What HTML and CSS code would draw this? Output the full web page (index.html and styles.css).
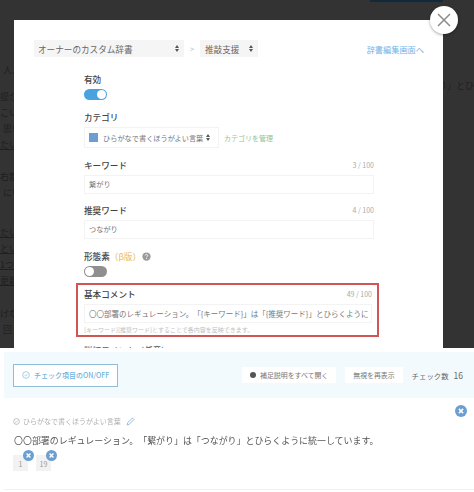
FILE: index.html
```html
<!DOCTYPE html>
<html lang="ja">
<head>
<meta charset="utf-8">
<title>カスタム辞書</title>
<link rel="stylesheet" href="styles.css">
</head>
<body>
<div class="page">
  <section class="backdrop">
    <div class="backpage">
      <div class="topbar"></div>
      <p class="bl l1">人人</p>
      <p class="bl l2 right">り」とひ</p>
      <p class="bl l3">提が</p>
      <p class="bl l4">こい</p>
      <p class="bl l4 ind">思い</p>
      <p class="bl l4 ul">たい</p>
      <p class="bl l5">右割</p>
      <p class="bl l4 ind">にい</p>
      <p class="bl l6 ul">たい</p>
      <p class="bl l4 ul">とい</p>
      <p class="bl l4 ul">1つ</p>
      <p class="bl l4 ul">更新</p>
      <p class="bl l7">けな</p>
      <p class="bl l4 ind">回</p>
    </div>
    <div class="modal">
      <div class="modal-head">
        <div class="dict-path">
          <div class="select sel-owner"><span>オーナーのカスタム辞書</span><i class="updown"></i></div>
          <span class="gt">&gt;</span>
          <div class="select sel-sub"><span>推敲支援</span><i class="updown"></i></div>
        </div>
        <a class="edit-link">辞書編集画面へ</a>
      </div>
      <div class="form">
        <div class="label lab-on">有効</div>
        <div class="toggle on"><i></i></div>
        <div class="label lab-cat">カテゴリ</div>
        <div class="cat-row">
          <div class="cat-select"><b class="swatch"></b><span>ひらがなで書くほうがよい言葉</span><i class="updown"></i></div>
          <a class="cat-link">カテゴリを管理</a>
        </div>
        <div class="field-head fh-key"><span class="label">キーワード</span><span class="count">3 / 100</span></div>
        <div class="input">繋がり</div>
        <div class="field-head fh-rec"><span class="label">推奨ワード</span><span class="count">4 / 100</span></div>
        <div class="input">つながり</div>
        <div class="label lab-morph">形態素<span class="beta">（β版）</span>
          <svg class="help" viewBox="0 0 12 12"><circle cx="6" cy="6" r="5.5" fill="#9a9a9a"/><path d="M4.3 4.8c0-1 .8-1.6 1.7-1.6s1.7.6 1.7 1.5c0 1.2-1.6 1.2-1.6 2.5" fill="none" stroke="#fff" stroke-width="1.1"/><circle cx="6.1" cy="8.8" r=".7" fill="#fff"/></svg>
        </div>
        <div class="toggle off"><i></i></div>
        <div class="highlight">
          <div class="field-head fh-base"><span class="label">基本コメント</span><span class="count">49 / 100</span></div>
          <div class="input input-long"><span>〇〇部署のレギュレーション。「{キーワード}」は「{推奨ワード}」とひらくように</span></div>
          <div class="hint">{キーワード}{推奨ワード}とすることで各内容を反映できます。</div>
        </div>
        <div class="label lab-next">詳細コメント（任意）</div>
      </div>
    </div>
    <button class="close" aria-label="閉じる"><svg viewBox="0 0 16 16"><path d="M2 2 14 14M14 2 2 14" stroke="#8b8b8b" stroke-width="1.5" fill="none"/></svg></button>
  </section>
  <section class="panel">
    <div class="toolbar">
      <button class="check-btn"><svg viewBox="0 0 12 12"><circle cx="6" cy="6" r="5" fill="none" stroke="#7db6d8"/><path d="M3.8 6.1 5.4 7.6 8.2 4.6" fill="none" stroke="#7db6d8"/></svg>チェック項目のON/OFF</button>
      <div class="tools">
        <button class="tool"><i class="dot"></i>補足説明をすべて開く</button>
        <button class="tool tool-re">無視を再表示</button>
        <span class="check-count">チェック数<b>16</b></span>
      </div>
    </div>
    <div class="card">
      <svg class="x-badge big" viewBox="0 0 12 12"><circle cx="6" cy="6" r="6" fill="#6b9fd1"/><path d="M3.9 3.9 8.1 8.1M8.1 3.9 3.9 8.1" stroke="#fff" stroke-width="1.5"/></svg>
      <div class="cat-tag">
        <svg class="tick" viewBox="0 0 12 12"><circle cx="6" cy="6" r="5" fill="none" stroke="#9a9a9a"/><path d="M3.8 6.1 5.4 7.6 8.2 4.6" fill="none" stroke="#9a9a9a"/></svg>
        <span>ひらがなで書くほうがよい言葉</span>
        <svg class="pencil" viewBox="0 0 12 12"><path d="M1.5 10.5 2.3 7.6 8.6 1.4 10.6 3.4 4.4 9.7Z" fill="none" stroke="#7aa7d6"/></svg>
      </div>
      <p class="comment">〇〇部署のレギュレーション。「繋がり」は「つながり」とひらくように統一しています。</p>
      <div class="pages">
        <span class="pg">1<svg class="x-badge" viewBox="0 0 12 12"><circle cx="6" cy="6" r="6" fill="#6b9fd1"/><path d="M3.9 3.9 8.1 8.1M8.1 3.9 3.9 8.1" stroke="#fff" stroke-width="1.5"/></svg></span>
        <span class="pg">19<svg class="x-badge" viewBox="0 0 12 12"><circle cx="6" cy="6" r="6" fill="#6b9fd1"/><path d="M3.9 3.9 8.1 8.1M8.1 3.9 3.9 8.1" stroke="#fff" stroke-width="1.5"/></svg></span>
      </div>
    </div>
  </section>
</div>
</body>
</html>
```

FILE: styles.css
```css
* { box-sizing: border-box; }
html, body { margin: 0; padding: 0; background: #fff; }
body { font-family: "Noto Sans CJK JP", "Noto Sans", sans-serif; color: #444; text-spacing-trim: space-all; }
.page { width: 474px; height: 492px; overflow: hidden; filter: blur(.5px); }
button { font-family: inherit; margin: 0; cursor: pointer; }

.backdrop { position: relative; height: 348px; background: #333; }
.backpage { height: 348px; overflow: hidden; color: #1f1f1f; font-size: 9px; line-height: 13px; }
.topbar { width: 73px; height: 2px; margin-left: 370px; background: #10293d; }
.bl { margin: 3px 0 0; height: 13px; white-space: nowrap; }
.bl.l1 { margin-top: 61px; padding-left: 3px; }
.bl.l2 { margin-top: 3px; text-align: right; }
.bl.l3 { margin-top: -2px; }
.bl.ind { padding-left: 3px; }
.bl.ul { text-decoration: underline; }
.bl.l5 { margin-top: 19px; }
.bl.l6 { margin-top: 27px; }
.bl.l7 { margin-top: 20px; }

.modal { position: absolute; left: 14px; top: 20px; width: 429px; height: 328px; overflow: hidden; background: #fff; }
.modal-head { display: flex; justify-content: space-between; align-items: center; height: 17px; margin: 20px 19px 0 20px; }
.dict-path { display: flex; align-items: center; }
.select { display: flex; align-items: center; justify-content: space-between; height: 17px; padding: 0 3px 0 4px; background: #f5f5f5; font-size: 8.6px; color: #666; }
.sel-owner { width: 150px; }
.sel-sub { width: 58px; padding-left: 5px; }
.gt { width: 16px; text-align: center; font-size: 8px; color: #bbb; }
.updown { display: inline-block; flex: none; width: 6px; height: 7px; position: relative; margin-right: 1px; }
.updown::before, .updown::after { content: ""; position: absolute; left: 1px; border-left: 2px solid transparent; border-right: 2px solid transparent; }
.updown::before { top: 0; border-bottom: 3px solid #555; }
.updown::after { bottom: 0; border-top: 3px solid #555; }
.edit-link { font-size: 8.2px; color: #6cb5e8; }

.form { width: 290px; margin-left: 70px; }
.label { font-size: 8.6px; font-weight: 500; line-height: 12px; color: #444; }
.lab-on { margin-top: 16px; }
.toggle { display: flex; align-items: center; width: 23px; height: 11px; border-radius: 6px; padding: 1px; margin-top: 4px; }
.toggle i { width: 9px; height: 9px; border-radius: 50%; background: #fff; }
.toggle.on { background: #4aa3df; justify-content: flex-end; }
.toggle.off { background: #8f8f8f; margin-top: 4px; }
.lab-cat { margin-top: 11px; }
.cat-row { display: flex; align-items: center; margin-top: 4px; }
.cat-select { display: flex; align-items: center; width: 135px; height: 21px; padding: 0 6px 0 4px; border: 1px solid #f3f3f3; font-size: 7.2px; color: #777; }
.cat-select span { flex: 1; margin-left: 5px; white-space: nowrap; }
.swatch { flex: none; width: 9px; height: 9px; background: #6b9fd1; }
.cat-link { margin-left: 5px; font-size: 7px; color: #8fc494; }
.field-head { display: flex; justify-content: space-between; align-items: center; height: 12px; }
.fh-key { margin-top: 11px; }
.fh-rec { margin-top: 10px; }
.fh-base { margin-top: 3px; }
.count { font-size: 7px; color: #aaa; }
.input { height: 19px; margin-top: 4px; padding: 0 5px 0 4px; border: 1px solid #f3f3f3; font-size: 7.2px; line-height: 17px; color: #777; overflow: hidden; white-space: nowrap; }
.lab-morph { display: flex; align-items: center; margin-top: 11px; }
.beta { color: #e9bb55; font-weight: 400; }
.help { width: 9px; height: 9px; margin-left: 1px; }
.highlight { width: 303px; height: 54px; margin: 6px 0 0 -8px; padding: 0 5px 0 6px; border: 2px solid #d05555; }
.input-long { font-size: 7.5px; }
.hint { margin-top: 2px; font-size: 6px; line-height: 9px; color: #c0c0c0; white-space: nowrap; }
.lab-next { margin-top: 7px; color: #666; }

.close { position: absolute; left: 430px; top: 6px; width: 28px; height: 28px; padding: 6px; border: 0; border-radius: 50%; background: #fff; box-shadow: 0 1px 3px rgba(0,0,0,.35); }
.close svg { display: block; width: 16px; height: 16px; }

.panel { height: 144px; padding: 4px 0 0 4px; }
.toolbar { display: flex; justify-content: space-between; align-items: center; height: 46px; padding: 0 11px 0 9px; background: #f3fafd; }
.check-btn { display: flex; align-items: center; width: 105px; height: 23px; padding: 0 0 0 8px; border: 1px solid #8fbdd6; background: #fff; font-size: 7px; font-weight: 500; color: #6fb2dc; white-space: nowrap; }
.check-btn svg { width: 8px; height: 8px; margin-right: 4px; }
.tools { display: flex; align-items: center; }
.tool { display: flex; align-items: center; height: 16px; padding: 0 8px; border: 0; background: #fff; font-size: 6.9px; color: #777; white-space: nowrap; }
.tool-re { margin-left: 9px; }
.dot { width: 6px; height: 6px; border-radius: 50%; background: #555; margin-right: 4px; }
.check-count { display: flex; align-items: center; margin-left: 9px; font-size: 7.4px; color: #666; white-space: nowrap; }
.check-count b { margin-left: 5px; font-size: 8.5px; font-weight: 400; }

.card { position: relative; height: 92px; padding: 0 0 0 9px; border-bottom: 1px solid #f0f0f0; }
.big { position: absolute; right: 7px; top: 7px; width: 12px; height: 12px; }
.cat-tag { display: flex; align-items: center; padding-top: 16px; height: 30px; font-size: 7px; color: #b0b0b0; white-space: nowrap; }
.tick { width: 7px; height: 7px; margin-right: 3px; }
.pencil { width: 9px; height: 9px; margin-left: 5px; }
.comment { margin: 6px 0 0 1px; font-size: 8.95px; line-height: 14px; color: #555; white-space: nowrap; }
.pages { display: flex; gap: 8px; margin-top: 7px; }
.pg { position: relative; width: 15px; height: 16px; background: #f2f2f2; font-size: 7px; line-height: 18px; text-align: center; color: #999; }
.pg .x-badge { position: absolute; right: -6px; top: -5px; width: 11px; height: 11px; }
```
